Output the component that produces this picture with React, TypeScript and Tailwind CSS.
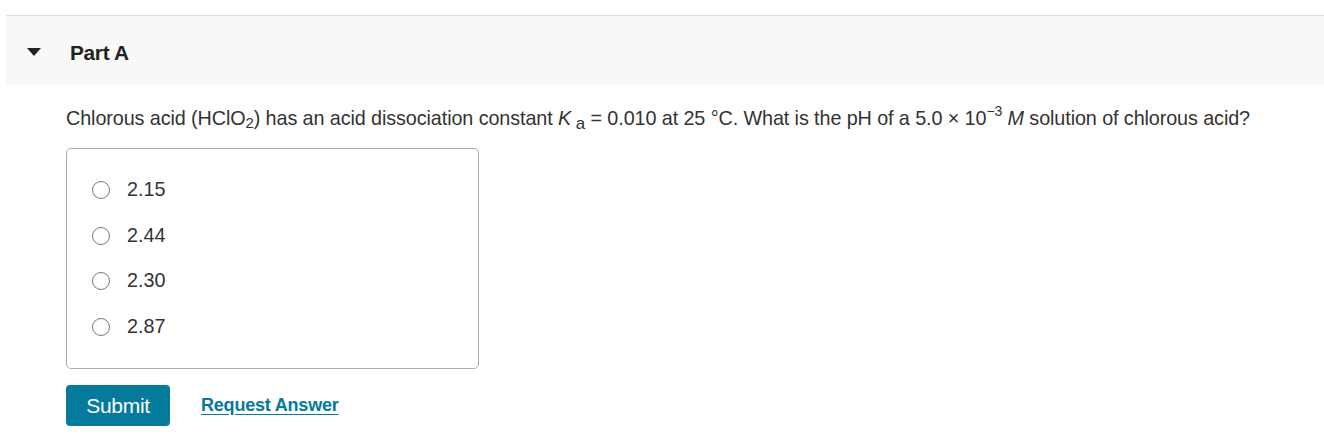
import React from "react";

export default function App() {
  const options = ["2.15", "2.44", "2.30", "2.87"];
  return (
    <div className="w-[1324px] h-[440px] bg-white pt-[15px] pl-[6px] text-[#333] font-['Liberation_Sans',Arial,sans-serif]">
      <div className="border-t border-[#dcdcdc] bg-[#f8f8f8] h-[70px] flex items-center">
        <svg width="14" height="9" viewBox="0 0 14 9" className="ml-[21px] mt-[4px]">
          <polygon points="0,0 14,0 7,8" fill="#222" />
        </svg>
        <span className="ml-[29px] mt-[4px] text-[20.8px] font-bold text-[#222] tracking-[-0.3px]">Part A</span>
      </div>
      <div className="pl-[60px]">
        <p className="mt-[21px] text-[19.8px] leading-[24px] tracking-[-0.1px]">
          Chlorous acid (HClO<sub className="text-[15px] relative top-[3px] align-baseline">2</sub>) has an acid dissociation constant <i>K</i>
          <sub className="text-[17px] relative top-[4px] align-baseline"> a</sub> = 0.010 at 25 °C. What is the pH of a 5.0 × 10
          <sup className="text-[14px] relative -top-[9px] align-baseline">−3</sup> <i>M</i> solution of chlorous acid?
        </p>
        <div className="mt-[18px] w-[413px] border border-[#ababab] rounded-[5px] pt-[18px] pb-[18px]">
          {options.map((o) => (
            <div key={o} className="h-[45.7px] flex items-center">
              <span className="ml-[25px] w-[18px] h-[18px] rounded-full border border-[#767676] bg-white" />
              <span className="ml-[17px] text-[19.8px] text-[#333]">{o}</span>
            </div>
          ))}
        </div>
        <div className="mt-[16px] flex items-center">
          <button className="w-[104px] h-[41px] rounded-[4px] bg-[#047a9c] text-white text-[21px] tracking-[-0.3px]">Submit</button>
          <a className="ml-[31px] text-[#047a9c] text-[18px] font-bold underline underline-offset-[3px] tracking-[-0.2px]">Request Answer</a>
        </div>
      </div>
    </div>
  );
}
